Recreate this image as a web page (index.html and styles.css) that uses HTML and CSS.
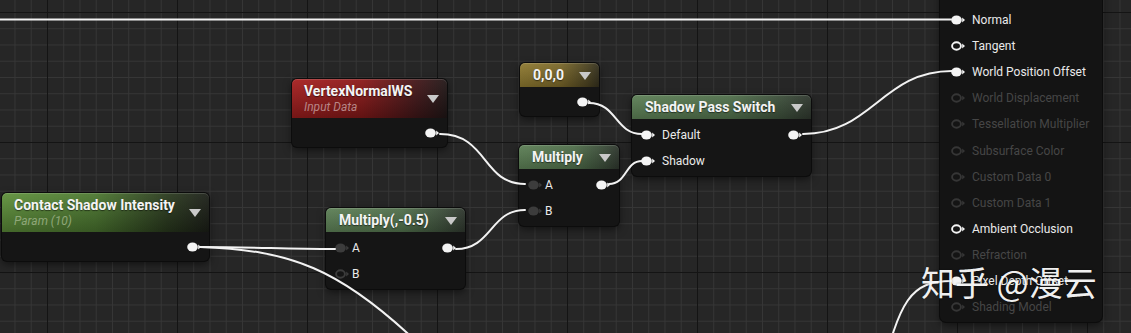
FILE: index.html
```html
<!DOCTYPE html>
<html lang="en">
<head>
<meta charset="utf-8">
<title>Material Graph</title>
<link rel="stylesheet" href="styles.css">
</head>
<body>
<svg class="defs" width="0" height="0" aria-hidden="true">
  <defs>
    <symbol id="pin-fill" viewBox="0 0 14 10">
      <ellipse cx="5.5" cy="5" rx="5.3" ry="4.6"/>
      <path d="M11.2 2.6 L14 5 L11.2 7.4 Z"/>
    </symbol>
    <symbol id="pin-ring" viewBox="0 0 14 10">
      <ellipse cx="5.5" cy="5" rx="4.4" ry="3.7" fill="none" stroke="currentColor" stroke-width="1.9"/>
      <path d="M11.2 2.6 L14 5 L11.2 7.4 Z"/>
    </symbol>
  </defs>
</svg>

<div class="graph">

  <!-- Contact Shadow Intensity (scalar parameter) -->
  <div class="node node-csi">
    <div class="head head-tall head-param">
      <div class="titles">
        <span class="title">Contact Shadow Intensity</span>
        <span class="subtitle sub-param">Param (10)</span>
      </div>
      <span class="caret"></span>
    </div>
    <div class="body body-single">
      <div class="row out"><svg class="pin pin-on"><use href="#pin-fill"/></svg></div>
    </div>
  </div>

  <!-- VertexNormalWS -->
  <div class="node node-vn">
    <div class="head head-tall head-input">
      <div class="titles">
        <span class="title">VertexNormalWS</span>
        <span class="subtitle sub-input">Input Data</span>
      </div>
      <span class="caret"></span>
    </div>
    <div class="body body-single">
      <div class="row out"><svg class="pin pin-on"><use href="#pin-fill"/></svg></div>
    </div>
  </div>

  <!-- Multiply(,-0.5) -->
  <div class="node node-mulhalf">
    <div class="head head-math">
      <span class="title">Multiply(,-0.5)</span>
      <span class="caret"></span>
    </div>
    <div class="body body-double">
      <div class="row in-out">
        <div class="pin-in"><svg class="pin pin-gray"><use href="#pin-fill"/></svg><span class="label">A</span></div>
        <svg class="pin pin-on"><use href="#pin-fill"/></svg>
      </div>
      <div class="row in-out">
        <div class="pin-in"><svg class="pin pin-gray"><use href="#pin-ring"/></svg><span class="label">B</span></div>
      </div>
    </div>
  </div>

  <!-- 0,0,0 constant -->
  <div class="node node-const">
    <div class="head head-const">
      <span class="title">0,0,0</span>
      <span class="caret"></span>
    </div>
    <div class="body body-single">
      <div class="row out"><svg class="pin pin-on"><use href="#pin-fill"/></svg></div>
    </div>
  </div>

  <!-- Multiply -->
  <div class="node node-mul">
    <div class="head head-math">
      <span class="title">Multiply</span>
      <span class="caret"></span>
    </div>
    <div class="body body-double">
      <div class="row in-out">
        <div class="pin-in"><svg class="pin pin-gray"><use href="#pin-fill"/></svg><span class="label">A</span></div>
        <svg class="pin pin-on"><use href="#pin-fill"/></svg>
      </div>
      <div class="row in-out">
        <div class="pin-in"><svg class="pin pin-gray"><use href="#pin-fill"/></svg><span class="label">B</span></div>
      </div>
    </div>
  </div>

  <!-- Shadow Pass Switch -->
  <div class="node node-sps">
    <div class="head head-math">
      <span class="title">Shadow Pass Switch</span>
      <span class="caret"></span>
    </div>
    <div class="body body-double">
      <div class="row in-out">
        <div class="pin-in wide"><svg class="pin pin-on"><use href="#pin-fill"/></svg><span class="label">Default</span></div>
        <svg class="pin pin-on"><use href="#pin-fill"/></svg>
      </div>
      <div class="row in-out">
        <div class="pin-in wide"><svg class="pin pin-on"><use href="#pin-fill"/></svg><span class="label">Shadow</span></div>
      </div>
    </div>
  </div>

  <!-- Material result node -->
  <div class="node node-result">
    <div class="result-pins">
      <div class="rpin"><svg class="pin pin-on"><use href="#pin-fill"/></svg><span class="label">Normal</span></div>
      <div class="rpin"><svg class="pin pin-on"><use href="#pin-ring"/></svg><span class="label">Tangent</span></div>
      <div class="rpin"><svg class="pin pin-on"><use href="#pin-fill"/></svg><span class="label">World Position Offset</span></div>
      <div class="rpin off"><svg class="pin"><use href="#pin-ring"/></svg><span class="label">World Displacement</span></div>
      <div class="rpin off"><svg class="pin"><use href="#pin-ring"/></svg><span class="label">Tessellation Multiplier</span></div>
      <div class="rpin off"><svg class="pin"><use href="#pin-ring"/></svg><span class="label">Subsurface Color</span></div>
      <div class="rpin off"><svg class="pin"><use href="#pin-ring"/></svg><span class="label">Custom Data 0</span></div>
      <div class="rpin off"><svg class="pin"><use href="#pin-ring"/></svg><span class="label">Custom Data 1</span></div>
      <div class="rpin"><svg class="pin pin-on"><use href="#pin-ring"/></svg><span class="label">Ambient Occlusion</span></div>
      <div class="rpin off"><svg class="pin"><use href="#pin-ring"/></svg><span class="label">Refraction</span></div>
      <div class="rpin"><svg class="pin pin-on"><use href="#pin-fill"/></svg><span class="label">Pixel Depth Offset</span></div>
      <div class="rpin off"><svg class="pin"><use href="#pin-ring"/></svg><span class="label">Shading Model</span></div>
    </div>
  </div>

  <!-- connection splines -->
  <svg class="wires" width="1131" height="333" viewBox="0 0 1131 333">
    <path d="M0 19.5 H951"/>
    <path d="M200 247 C260 247 280 249 335 249"/>
    <path d="M200 247 C290 250 340 268 420 345"/>
    <path d="M456 249 C492 249 490 210 525 210"/>
    <path d="M440 134 C488 134 482 184 525 184"/>
    <path d="M609 184 C627 184 625 161 642 161"/>
    <path d="M589 103 C617 103 615 134 642 134"/>
    <path d="M803 134 C872 134 882 71 952 71"/>
    <path d="M880 380 C900 300 910 281 952 281"/>
  </svg>

  <div class="watermark">知乎 @漫云</div>
</div>
</body>
</html>
```

FILE: styles.css
```css
html, body {
  margin: 0;
  padding: 0;
  background: #262626;
}

.defs {
  position: absolute;
  width: 0;
  height: 0;
  overflow: hidden;
}

/* canvas with a fine grid and a coarse darker grid */
.graph {
  position: relative;
  width: 1131px;
  height: 333px;
  overflow: hidden;
  font-family: Roboto, "Liberation Sans", sans-serif;
  background-color: #262626;
  background-image:
    linear-gradient(to right, #141414 1px, transparent 1px),
    linear-gradient(to bottom, #141414 1px, transparent 1px),
    linear-gradient(to right, #363636 1px, transparent 1px),
    linear-gradient(to bottom, #363636 1px, transparent 1px);
  background-size: 130px 130px, 130px 130px, 16.25px 16.25px, 16.25px 16.25px;
  background-position: 47px 12px, 47px 12px, 47px 12px, 47px 12px;
}

/* ---------- nodes ---------- */
.node {
  position: absolute;
  display: flex;
  flex-direction: column;
  background: #151515;
  border-radius: 5px;
  box-shadow: 0 0 0 1px #0c0c0c, 0 3px 8px rgba(0, 0, 0, 0.55);
}

.head {
  display: flex;
  align-items: center;
  justify-content: space-between;
  height: 24px;
  padding: 0 8px 0 13px;
  border-radius: 5px 5px 0 0;
  box-shadow: inset 0 1px 0 rgba(255, 255, 255, 0.14);
}

.head-tall {
  height: 39px;
  padding-left: 12px;
}

.titles {
  display: flex;
  flex-direction: column;
  gap: 1px;
}

.title {
  color: #f4f4f4;
  font-weight: 700;
  font-size: 14px;
  line-height: 16px;
  white-space: nowrap;
  text-shadow: 0 1px 1px rgba(0, 0, 0, 0.5);
}

.subtitle {
  font-style: italic;
  font-size: 12px;
  line-height: 15px;
}

.sub-param { color: #8fa779; }
.sub-input { color: #b88686; }

.caret {
  width: 0;
  height: 0;
  border-left: 6px solid transparent;
  border-right: 6px solid transparent;
  border-top: 8px solid #c9c9c9;
  margin-top: 1px;
}

.head-param {
  background:
    linear-gradient(to bottom, rgba(255, 255, 255, 0.06), rgba(0, 0, 0, 0.28)),
    linear-gradient(to right, #5f913b 0%, #4c7830 45%, #2a3a1e 80%, #1c1f18 100%);
}

.head-input {
  background:
    linear-gradient(to bottom, rgba(255, 255, 255, 0.05), rgba(0, 0, 0, 0.3)),
    linear-gradient(to right, #a82020 0%, #8c1a1a 45%, #45181a 80%, #221818 100%);
}

.head-math {
  background:
    linear-gradient(to bottom, rgba(255, 255, 255, 0.06), rgba(0, 0, 0, 0.2)),
    linear-gradient(to right, #5c7f55 0%, #4f6e4a 55%, #3a4b38 85%, #2e362d 100%);
}

.head-const {
  background:
    linear-gradient(to bottom, rgba(255, 255, 255, 0.06), rgba(0, 0, 0, 0.22)),
    linear-gradient(to right, #8f7a30 0%, #7c692a 50%, #4d4421 85%, #34301d 100%);
}

.body {
  display: flex;
  flex-direction: column;
}

.body-single { padding: 2px 0 1px; }
.body-double { padding: 3px 0 2px; }

.row {
  display: flex;
  align-items: center;
  height: 26px;
}

.row.out {
  justify-content: flex-end;
  padding-right: 8px;
}

.row.in-out {
  justify-content: space-between;
  padding: 0 9px;
}

.pin-in {
  display: flex;
  align-items: center;
  gap: 3px;
}

.pin-in.wide { gap: 7px; }

.label {
  color: #eaeaea;
  font-size: 12px;
  line-height: 14px;
  white-space: nowrap;
}

.pin {
  width: 14px;
  height: 10px;
  flex: none;
  fill: currentColor;
  color: #3a3a3a;
}

.pin-on { color: #f4f4f4; }
.pin-gray { color: #3c3c3c; }

/* node placements on the canvas */
.node-csi { left: 2px; top: 193px; width: 207px; }
.node-vn { left: 292px; top: 79px; width: 155px; }
.node-mulhalf { left: 326px; top: 208px; width: 139px; }
.node-const { left: 520px; top: 63px; width: 79px; }
.node-mul { left: 519px; top: 145px; width: 100px; }
.node-sps { left: 632px; top: 95px; width: 179px; }

.node-result {
  left: 940px;
  top: -20px;
  width: 162px;
  height: 342px;
  background: #141414;
  border-radius: 6px;
}

.result-pins {
  display: flex;
  flex-direction: column;
  padding: 27px 0 3px 11px;
}

.rpin {
  display: flex;
  align-items: center;
  gap: 7px;
  height: 26.1px;
}

.rpin.off .label { color: #464646; }
.rpin.off .pin { color: #363636; }

/* splines */
.wires {
  position: absolute;
  left: 0;
  top: 0;
  pointer-events: none;
}

.wires path {
  fill: none;
  stroke: #f2f2f2;
  stroke-width: 2;
  stroke-linecap: round;
}

.watermark {
  position: absolute;
  left: 921px;
  top: 260px;
  color: rgba(255, 255, 255, 0.95);
  font-family: "Noto Sans CJK SC", sans-serif;
  font-size: 34px;
  line-height: 44px;
  white-space: nowrap;
  text-shadow: 0 0 2px rgba(0, 0, 0, 0.35);
}
```
